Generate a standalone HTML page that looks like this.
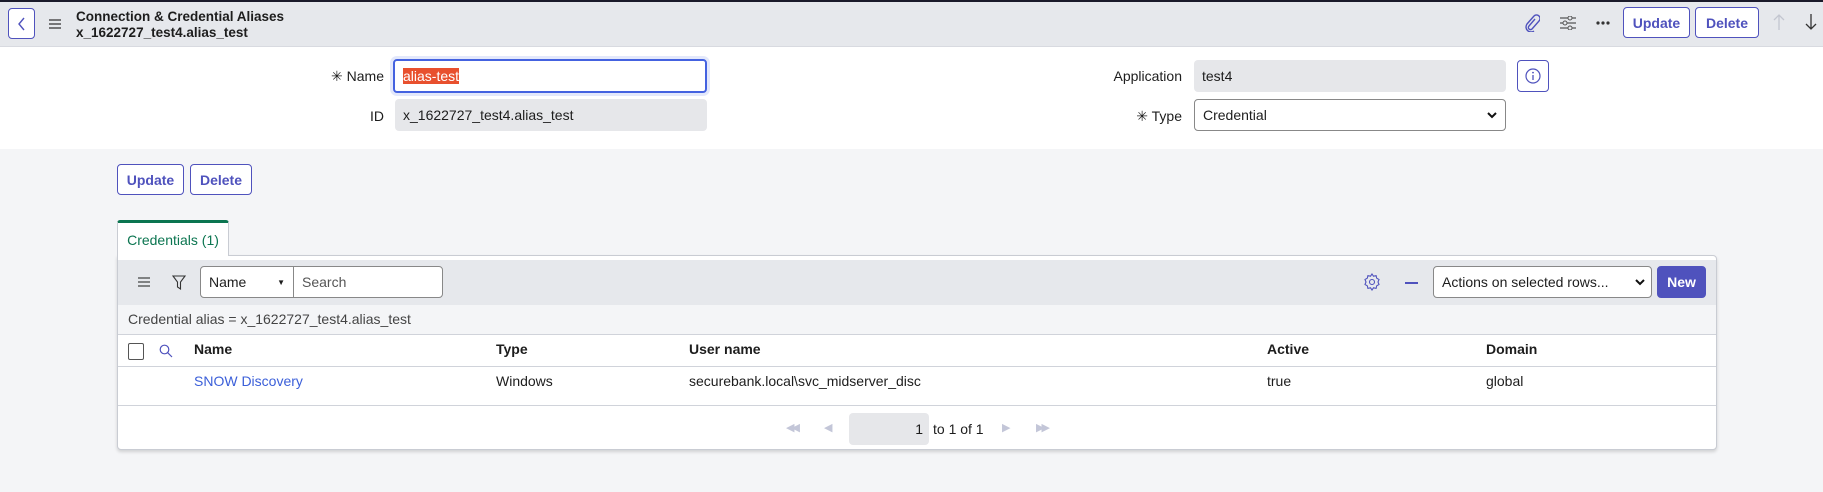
<!DOCTYPE html>
<html><head><meta charset="utf-8"><style>
*{box-sizing:border-box;margin:0;padding:0}
body{width:1823px;height:492px;background:#f4f5f7;font-family:"Liberation Sans",sans-serif;font-size:14px;color:#1d1d1d;position:relative;overflow:hidden}
.a{position:absolute}
.btn{position:absolute;border:1px solid #4f52bd;border-radius:4px;background:#fff;color:#4f52bd;font-weight:bold;font-size:14px;display:flex;align-items:center;justify-content:center}
.inp{position:absolute;border-radius:4px;display:flex;align-items:center;padding-left:8px;font-size:14px}
.lbl{position:absolute;text-align:right;font-size:14px}
.th{position:absolute;font-weight:bold;font-size:14px;top:341px}
.td{position:absolute;font-size:14px;top:373px}
</style></head><body>
<div class="a" style="left:0;top:0;width:1823px;height:47px;background:#e6e8ec;border-top:2px solid #1a1a2a;border-bottom:1px solid #d8dae0"></div>
<div class="btn" style="left:8px;top:8px;width:27px;height:31px"><svg width="10" height="14" viewBox="0 0 10 14"><path d="M7 1L2 7l5 6" stroke="#4f52bd" stroke-width="1.4" fill="none"/></svg></div>
<svg class="a" style="left:49px;top:19px" width="12" height="10"><path d="M0 1h12M0 5h12M0 9h12" stroke="#333" stroke-width="1.3"/></svg>
<div class="a" style="left:76px;top:9px;font-weight:bold;font-size:13.5px;line-height:16px">Connection &amp; Credential Aliases<br>x_1622727_test4.alias_test</div>
<svg class="a" style="left:1524px;top:14px" width="16" height="18" viewBox="0 0 16 18"><path d="M11 5l-6 7a2 2 0 003 3l7-8a3.5 3.5 0 00-5-5L3 10a5 5 0 007 7" stroke="#4f52bd" stroke-width="1.4" fill="none"/></svg>
<svg class="a" style="left:1560px;top:16px" width="16" height="14"><path d="M0 2h16M0 7h16M0 12h16" stroke="#555" stroke-width="1.2"/><circle cx="10" cy="2" r="2" fill="#e6e8ec" stroke="#555"/><circle cx="5" cy="7" r="2" fill="#e6e8ec" stroke="#555"/><circle cx="10" cy="12" r="2" fill="#e6e8ec" stroke="#555"/></svg>
<svg class="a" style="left:1596px;top:21px" width="14" height="4"><circle cx="2" cy="2" r="1.6" fill="#333"/><circle cx="7" cy="2" r="1.6" fill="#333"/><circle cx="12" cy="2" r="1.6" fill="#333"/></svg>
<div class="btn" style="left:1623px;top:7px;width:67px;height:31px">Update</div>
<div class="btn" style="left:1695px;top:7px;width:64px;height:31px">Delete</div>
<svg class="a" style="left:1773px;top:14px" width="12" height="16"><path d="M6 1v15M1 6l5-5 5 5" stroke="#c3c6d0" stroke-width="1.3" fill="none"/></svg>
<svg class="a" style="left:1805px;top:14px" width="12" height="16"><path d="M6 0v15M1 10l5 5 5-5" stroke="#333" stroke-width="1.3" fill="none"/></svg>

<div class="a" style="left:0;top:47px;width:1823px;height:102px;background:#fff"></div>
<div class="lbl" style="left:300px;top:68px;width:84px">✳ Name</div>
<div class="inp" style="left:393px;top:59px;width:314px;height:34px;border:2px solid #4462e0;box-shadow:0 0 0 3px #e3e8fb"><span style="background:#e8502e;color:#fff">alias-test</span></div>
<div class="lbl" style="left:300px;top:108px;width:84px">ID</div>
<div class="inp" style="left:395px;top:99px;width:312px;height:32px;background:#e6e7ea">x_1622727_test4.alias_test</div>
<div class="lbl" style="left:1080px;top:68px;width:102px">Application</div>
<div class="inp" style="left:1194px;top:60px;width:312px;height:32px;background:#e6e7ea">test4</div>
<div class="btn" style="left:1517px;top:60px;width:32px;height:32px"><svg width="16" height="16"><circle cx="8" cy="8" r="7" stroke="#4f52bd" stroke-width="1.2" fill="none"/><path d="M8 7v5" stroke="#4f52bd" stroke-width="1.3"/><circle cx="8" cy="4.6" r=".9" fill="#4f52bd"/></svg></div>
<div class="lbl" style="left:1080px;top:108px;width:102px">✳ Type</div>
<div class="inp" style="left:1194px;top:99px;width:312px;height:32px;border:1px solid #888;background:#fff;justify-content:space-between;padding-right:8px">Credential<svg width="10" height="7"><path d="M1 1l4 4 4-4" stroke="#111" stroke-width="2" fill="none"/></svg></div>

<div class="btn" style="left:117px;top:164px;width:67px;height:31px">Update</div>
<div class="btn" style="left:190px;top:164px;width:62px;height:31px">Delete</div>

<div class="a" style="left:117px;top:220px;width:112px;height:36px;background:#fff;border:1px solid #c9ccd3;border-top:3px solid #0b7550;border-bottom:none;border-radius:3px 3px 0 0;color:#0b7550;display:flex;align-items:center;justify-content:center;z-index:2">Credentials (1)</div>
<div class="a" style="left:117px;top:255px;width:1600px;height:195px;background:#fff;border:1px solid #c9ccd3;border-radius:0 4px 4px 4px;box-shadow:0 2px 3px rgba(0,0,0,.15)"></div>
<div class="a" style="left:118px;top:260px;width:1598px;height:45px;background:#e6e8ec"></div>
<svg class="a" style="left:138px;top:277px" width="12" height="10"><path d="M0 1h12M0 5h12M0 9h12" stroke="#444" stroke-width="1.3"/></svg>
<svg class="a" style="left:172px;top:275px" width="14" height="15"><path d="M1 1h12l-4.5 6v7l-3-2V7z" stroke="#333" stroke-width="1.1" fill="none"/></svg>
<div class="inp" style="left:200px;top:266px;width:94px;height:32px;border:1px solid #888;background:#fff;border-radius:4px 0 0 4px;justify-content:space-between;padding-right:8px">Name<span style="font-size:8px">▼</span></div>
<div class="inp" style="left:293px;top:266px;width:150px;height:32px;border:1px solid #888;background:#fff;border-radius:0 4px 4px 0;color:#555">Search</div>
<svg class="a" style="left:1362px;top:272px" width="20" height="20" viewBox="0 0 20 20"><path d="M10 2l1.5 2.2 2.6-.6.6 2.6L17 7.5l-1 2.5 1 2.5-2.3 1.3-.6 2.6-2.6-.6L10 18l-1.5-2.2-2.6.6-.6-2.6L3 12.5 4 10 3 7.5l2.3-1.3.6-2.6 2.6.6z" stroke="#4f52bd" stroke-width="1.1" fill="none"/><circle cx="10" cy="10" r="2.5" stroke="#4f52bd" stroke-width="1.1" fill="none"/></svg>
<div class="a" style="left:1405px;top:282px;width:13px;height:1.5px;background:#4f52bd"></div>
<div class="inp" style="left:1433px;top:266px;width:219px;height:32px;border:1px solid #888;background:#fff;justify-content:space-between;padding-right:6px">Actions on selected rows...<svg width="10" height="7"><path d="M1 1l4 4 4-4" stroke="#111" stroke-width="2" fill="none"/></svg></div>
<div class="btn" style="left:1657px;top:266px;width:49px;height:32px;background:#4f52bd;color:#fff">New</div>
<div class="a" style="left:118px;top:305px;width:1598px;height:30px;background:#f4f5f7;border-bottom:1px solid #d0d3da;padding:6px 10px;color:#444">Credential alias = x_1622727_test4.alias_test</div>
<div class="a" style="left:128px;top:343px;width:16px;height:17px;border:1px solid #555;border-radius:2px"></div>
<svg class="a" style="left:159px;top:344px" width="14" height="14"><circle cx="5.5" cy="5.5" r="4.3" stroke="#4f52bd" stroke-width="1.2" fill="none"/><path d="M8.7 8.7L13 13" stroke="#4f52bd" stroke-width="1.2"/></svg>
<div class="th" style="left:194px">Name</div><div class="th" style="left:496px">Type</div><div class="th" style="left:689px">User name</div><div class="th" style="left:1267px">Active</div><div class="th" style="left:1486px">Domain</div>
<div class="a" style="left:118px;top:366px;width:1598px;height:1px;background:#d0d3da"></div>
<div class="td" style="left:194px;color:#3b5fd9">SNOW Discovery</div><div class="td" style="left:496px">Windows</div><div class="td" style="left:689px">securebank.local\svc_midserver_disc</div><div class="td" style="left:1267px">true</div><div class="td" style="left:1486px">global</div>
<div class="a" style="left:118px;top:405px;width:1598px;height:1px;background:#d0d3da"></div>
<div class="a" style="left:786px;top:421px;color:#c3c6d8;font-size:11px;letter-spacing:-3px">◀◀</div>
<div class="a" style="left:824px;top:421px;color:#c3c6d8;font-size:11px">◀</div>
<div class="a" style="left:849px;top:413px;width:80px;height:32px;background:#e6e7ea;border-radius:4px;text-align:right;padding:8px 6px 0 0">1</div>
<div class="a" style="left:933px;top:421px">to 1 of 1</div>
<div class="a" style="left:1002px;top:421px;color:#c3c6d8;font-size:11px">▶</div>
<div class="a" style="left:1036px;top:421px;color:#c3c6d8;font-size:11px;letter-spacing:-3px">▶▶</div>
</body></html>
